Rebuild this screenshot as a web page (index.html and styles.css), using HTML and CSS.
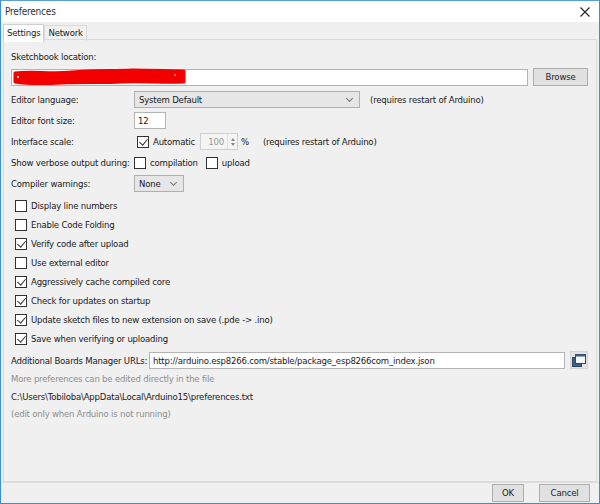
FILE: index.html
```html
<!DOCTYPE html>
<html lang="en">
<head>
    <meta charset="UTF-8">
    <title>Preferences</title>
    <link rel="stylesheet" href="styles.css">
</head>
<body>
    <div class="window">
        <div class="titlebar">
            <span class="title">Preferences</span>
            <svg class="close" width="10" height="10" viewBox="0 0 10 10"><path d="M0.5 0.5 L9.5 9.5 M9.5 0.5 L0.5 9.5" stroke="#222" stroke-width="1.1"/></svg>
        </div>

        <div class="tabs">
            <div class="tab active">Settings</div>
            <div class="tab">Network</div>
        </div>

        <div class="panel">
            <div class="label-top">Sketchbook location:</div>
            <div class="row sketch-row">
                <div class="field wide">
                    <svg class="scribble" width="180" height="18" viewBox="0 0 180 18">
                        <path d="M3 5 C20 3 40 6 60 4 C80 2 100 3 120 2 C140 2 160 3 172 3 L172 14 C150 15 130 13 110 14 C90 15 70 14 50 15 C30 16 15 16 3 14 Z" fill="#f20000" stroke="#f20000" stroke-width="3" stroke-linejoin="round"/>
                        <circle cx="6" cy="9" r="1" fill="#fff"/>
                        <circle cx="163" cy="7" r="0.8" fill="#fff"/>
                    </svg>
                </div>
                <div class="btn browse">Browse</div>
            </div>

            <div class="row">
                <div class="label">Editor language:</div>
                <div class="select lang">System Default<span class="chev"></span></div>
                <div class="note">(requires restart of Arduino)</div>
            </div>

            <div class="row">
                <div class="label">Editor font size:</div>
                <div class="field small">12</div>
            </div>

            <div class="row">
                <div class="label">Interface scale:</div>
                <span class="check on"></span><span class="cb-text">Automatic</span>
                <div class="spinner"><span class="spin-val">100</span><span class="spin-arrows"><i class="up"></i><i class="down"></i></span></div>
                <span class="pct">%</span>
                <div class="note scale-note">(requires restart of Arduino)</div>
            </div>

            <div class="row">
                <div class="label">Show verbose output during:</div>
                <span class="check"></span><span class="cb-text">compilation</span>
                <span class="check gap-left"></span><span class="cb-text">upload</span>
            </div>

            <div class="row">
                <div class="label">Compiler warnings:</div>
                <div class="select warn">None<span class="chev"></span></div>
            </div>

            <div class="options">
                <div class="opt"><span class="check"></span><span class="cb-text">Display line numbers</span></div>
                <div class="opt"><span class="check"></span><span class="cb-text">Enable Code Folding</span></div>
                <div class="opt"><span class="check on"></span><span class="cb-text">Verify code after upload</span></div>
                <div class="opt"><span class="check"></span><span class="cb-text">Use external editor</span></div>
                <div class="opt"><span class="check on"></span><span class="cb-text">Aggressively cache compiled core</span></div>
                <div class="opt"><span class="check on"></span><span class="cb-text">Check for updates on startup</span></div>
                <div class="opt"><span class="check on"></span><span class="cb-text">Update sketch files to new extension on save (.pde -&gt; .ino)</span></div>
                <div class="opt"><span class="check on"></span><span class="cb-text">Save when verifying or uploading</span></div>
            </div>

            <div class="row urls">
                <div class="url-label">Additional Boards Manager URLs:</div>
                <div class="field url">http://arduino.esp8266.com/stable/package_esp8266com_index.json</div>
                <div class="icon-btn">
                    <svg width="14" height="13" viewBox="0 0 14 13">
                        <rect x="0.5" y="3.5" width="9" height="9" fill="#3f5f86" stroke="#2c4668"/>
                        <rect x="3.5" y="0.5" width="10" height="9" fill="#f4f6f8" stroke="#2c4668"/>
                        <rect x="3.5" y="0.5" width="10" height="2" fill="#3f5f86"/>
                    </svg>
                </div>
            </div>

            <div class="info grey">More preferences can be edited directly in the file</div>
            <div class="info">C:\Users\Tobiloba\AppData\Local\Arduino15\preferences.txt</div>
            <div class="info grey">(edit only when Arduino is not running)</div>
        </div>

        <div class="footer">
            <div class="btn ok">OK</div>
            <div class="btn cancel">Cancel</div>
        </div>
    </div>
</body>
</html>
```

FILE: styles.css
```css
*{
    box-sizing: border-box;
}
body{
    margin: 0;
    font-family: "DejaVu Sans Condensed", "Liberation Sans", sans-serif;
    font-size: 9.5px;
    letter-spacing: -0.2px;
    color: #1a1a1a;
    white-space: nowrap;
}
.window{
    width: 600px;
    height: 504px;
    border: 1px solid #3a8fd6;
    border-top-color: #5a9fd8;
    background-color: #f0f0f0;
    display: flex;
    flex-direction: column;
}
.titlebar{
    height: 21px;
    background-color: #fff;
    display: flex;
    align-items: center;
    justify-content: space-between;
    padding: 0 9px 0 4px;
}
.title{
    font-size: 10px;
    color: #333;
}
.tabs{
    display: flex;
    padding: 2px 0 0 2px;
    height: 18px;
}
.tab{
    padding: 1px 3px 0 3px;
    height: 16px;
    margin-top: 1px;
    border: 1px solid #d9d9d9;
    border-bottom: none;
    background-color: #f0f0f0;
    color: #222;
}
.tab.active{
    background-color: #fff;
    height: 18px;
    margin-top: 0;
    padding: 2px 3px 0 3px;
    border-color: #d0d0d0;
    position: relative;
    z-index: 1;
}
.panel{
    margin: -1px 2px 0 2px;
    border: 1px solid #dadada;
    height: 443px;
    padding: 11px 8px 0 7px;
}
.label-top{
    height: 16px;
}
.row{
    display: flex;
    align-items: center;
    height: 21px;
}
.sketch-row{
    height: 20px;
    margin-bottom: 2px;
}
.label{
    min-width: 123px;
    flex-shrink: 0;
}
.field{
    height: 17px;
    background-color: #fff;
    border: 1px solid #b4b4b4;
    padding: 1px 0 0 3px;
    line-height: 14px;
}
.field.wide{
    width: 518px;
    position: relative;
}
.scribble{
    position: absolute;
    left: 0;
    top: -2px;
}
.btn{
    height: 18px;
    border: 1px solid #adadad;
    background-color: #e1e1e1;
    text-align: center;
    line-height: 16px;
    color: #222;
}
.browse{
    width: 55px;
    margin-left: 5px;
}
.select{
    height: 17px;
    border: 1px solid #b0b0b0;
    background-color: #e6e6e6;
    padding-left: 4px;
    line-height: 15px;
    position: relative;
}
.select.lang{
    width: 226px;
}
.select.warn{
    width: 50px;
}
.chev{
    position: absolute;
    right: 7px;
    top: 4px;
    width: 5px;
    height: 5px;
    border-right: 1px solid #777;
    border-bottom: 1px solid #777;
    transform: rotate(45deg);
}
.note{
    margin-left: 10px;
}
.scale-note{
    margin-left: 14px;
}
.field.small{
    width: 32px;
}
.check{
    width: 12px;
    height: 12px;
    border: 1px solid #333;
    background-color: #fff;
    flex-shrink: 0;
    position: relative;
}
.check.on::after{
    content: "";
    position: absolute;
    left: 3px;
    top: 0px;
    width: 4px;
    height: 7px;
    border-right: 1px solid #333;
    border-bottom: 1px solid #333;
    transform: rotate(40deg);
}
.row .label + .check.on{
    margin-left: 3px;
}
.cb-text{
    margin-left: 4px;
}
.gap-left{
    margin-left: 8px;
}
.spinner{
    display: flex;
    margin-left: 5px;
    width: 38px;
    height: 17px;
    border: 1px solid #d0d0d0;
    background-color: #f4f4f4;
}
.spin-val{
    flex: 1;
    text-align: right;
    padding-right: 3px;
    color: #999;
    line-height: 15px;
}
.spin-arrows{
    width: 10px;
    display: flex;
    flex-direction: column;
    justify-content: center;
    align-items: center;
    gap: 2px;
    border-left: 1px solid #e0e0e0;
}
.spin-arrows i{
    width: 0;
    height: 0;
    border-left: 2.5px solid transparent;
    border-right: 2.5px solid transparent;
}
.spin-arrows .up{
    border-bottom: 3px solid #888;
}
.spin-arrows .down{
    border-top: 3px solid #888;
}
.pct{
    margin-left: 3px;
}
.options{
    padding: 2px 0 0 4px;
}
.opt{
    display: flex;
    align-items: center;
    height: 19px;
}
.urls{
    margin-top: 2px;
    height: 20px;
}
.url-label{
    width: 138px;
    flex-shrink: 0;
}
.field.url{
    width: 417px;
}
.icon-btn{
    width: 18px;
    height: 18px;
    margin-left: 5px;
    background-color: #e3e3e3;
    border: 1px solid #d5d5d5;
    display: flex;
    align-items: center;
    justify-content: center;
}
.info{
    height: 17.5px;
    line-height: 17px;
}
.info:first-of-type{
    margin-top: 6px;
}
.grey{
    color: #8e8e8e;
}
.footer{
    flex: 1;
    display: flex;
    justify-content: flex-end;
    align-items: center;
    gap: 15px;
    padding: 0 9px 0 0;
    border-top: 1px solid #dddddd;
}
.ok{
    width: 32px;
}
.cancel{
    width: 51px;
}
```
